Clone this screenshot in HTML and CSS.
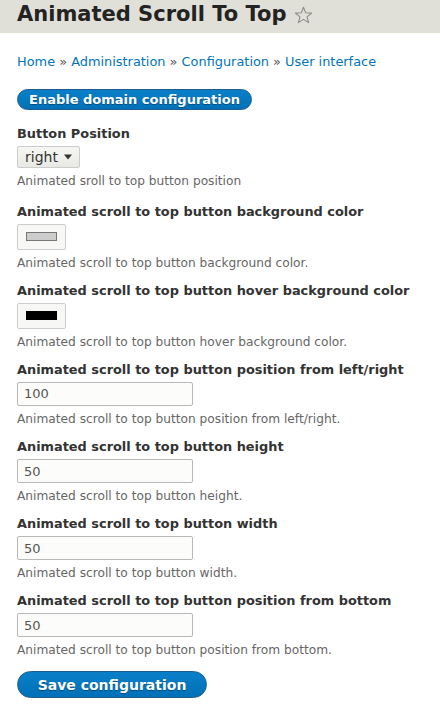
FILE: index.html
```html
<!DOCTYPE html>
<html lang="en">
<head>
<meta charset="utf-8">
<title>Animated Scroll To Top</title>
<link rel="stylesheet" href="styles.css">
</head>
<body>
<header class="page-header">
  <h1 class="page-title">Animated Scroll To Top
    <svg class="star" width="19" height="18" viewBox="0 0 20 19" aria-hidden="true"><path d="M10 1.3 L12.3 7.2 L18.6 7.5 L13.7 11.5 L15.4 17.6 L10 14.1 L4.6 17.6 L6.3 11.5 L1.4 7.5 L7.7 7.2 Z" fill="none" stroke="#8b8b86" stroke-width="1.1" stroke-linejoin="round"/></svg>
  </h1>
</header>
<main class="content">
  <nav class="breadcrumb">
    <a href="#">Home</a> » <a href="#">Administration</a> » <a href="#">Configuration</a> » <a href="#">User interface</a>
  </nav>
  <div class="actions-top"><a class="button button-small" href="#">Enable domain configuration</a></div>
  <form class="config-form">
    <div class="form-item form-item-select">
      <label class="label">Button Position</label>
      <div class="select"><span>right</span><svg width="8" height="6" viewBox="0 0 8 6" aria-hidden="true"><path d="M0 0.5 H8 L4 5.5 Z" fill="#333"/></svg></div>
      <div class="desc">Animated sroll to top button position</div>
    </div>
    <div class="form-item">
      <label class="label">Animated scroll to top button background color</label>
      <div class="color-input"><span class="swatch swatch-gray"></span></div>
      <div class="desc">Animated scroll to top button background color.</div>
    </div>
    <div class="form-item">
      <label class="label">Animated scroll to top button hover background color</label>
      <div class="color-input"><span class="swatch swatch-black"></span></div>
      <div class="desc">Animated scroll to top button hover background color.</div>
    </div>
    <div class="form-item">
      <label class="label">Animated scroll to top button position from left/right</label>
      <input class="text-input" type="text" value="100">
      <div class="desc">Animated scroll to top button position from left/right.</div>
    </div>
    <div class="form-item">
      <label class="label">Animated scroll to top button height</label>
      <input class="text-input" type="text" value="50">
      <div class="desc">Animated scroll to top button height.</div>
    </div>
    <div class="form-item">
      <label class="label">Animated scroll to top button width</label>
      <input class="text-input" type="text" value="50">
      <div class="desc">Animated scroll to top button width.</div>
    </div>
    <div class="form-item">
      <label class="label">Animated scroll to top button position from bottom</label>
      <input class="text-input" type="text" value="50">
      <div class="desc">Animated scroll to top button position from bottom.</div>
    </div>
    <div class="form-actions"><button class="button button-primary" type="button">Save configuration</button></div>
  </form>
</main>
</body>
</html>
```
FILE: styles.css
```css
html, body {
  margin: 0;
  padding: 0;
  background: #fff;
}
body {
  font-family: "DejaVu Sans", Verdana, sans-serif;
  font-size: 13px;
  color: #333;
}
.page-header {
  background: #e0e0d8;
  height: 33px;
  padding: 0 17px;
  box-sizing: border-box;
  overflow: hidden;
}
.page-title {
  margin: 0;
  font-size: 21px;
  line-height: 29px;
  font-weight: bold;
  color: #232323;
  display: flex;
  align-items: center;
  gap: 8px;
}
.star {
  display: block;
  margin-top: 1px;
}
.content {
  padding: 0 17px;
}
.breadcrumb {
  margin-top: 19px;
  line-height: 20px;
  font-size: 12.9px;
  color: #555;
}
.breadcrumb a {
  color: #0074bd;
  text-decoration: none;
}
.actions-top {
  margin-top: 17px;
  display: flex;
}
.button {
  display: inline-flex;
  align-items: center;
  justify-content: center;
  box-sizing: border-box;
  border: 1px solid #1e5c90;
  border-radius: 20em;
  color: #fff;
  font-family: "DejaVu Sans", Verdana, sans-serif;
  font-weight: bold;
  text-decoration: none;
  background: linear-gradient(to bottom, #0a7fc8 0%, #0071b8 100%);
  text-shadow: 0 1px 1px rgba(0,0,0,0.35);
}
.button-small {
  height: 21px;
  width: 235px;
  font-size: 13px;
  padding: 0;
}
.config-form {
  margin-top: 15px;
}
.form-item {
  margin-bottom: 11.2px;
}
.form-item-select {
  margin-bottom: 13.5px;
}
.label {
  display: block;
  font-weight: bold;
  line-height: 18px;
  font-size: 12.9px;
  color: #333;
  margin-bottom: 3px;
}
.select {
  box-sizing: border-box;
  width: 63px;
  height: 22px;
  border: 1px solid #ccc;
  border-radius: 2px;
  background: linear-gradient(to bottom, #f6f6f3, #e8e8e4);
  display: flex;
  align-items: center;
  padding: 0 7px;
  justify-content: space-between;
  font-size: 14px;
  color: #333;
}
.color-input {
  box-sizing: border-box;
  width: 49px;
  height: 26px;
  border: 1px solid #ccc;
  border-radius: 2px;
  background: #f7f7f5;
  display: flex;
  align-items: center;
  justify-content: center;
}
.swatch {
  display: block;
  width: 31px;
  height: 9px;
  box-sizing: border-box;
  border: 1px solid #777;
}
.swatch-gray { background: #cccccc; }
.swatch-black { background: #000; border-color: #000; }
.text-input {
  display: block;
  box-sizing: border-box;
  width: 176px;
  height: 24px;
  margin: 0;
  border: 1px solid #b8b8b8;
  border-radius: 2px;
  background: #fcfcfa;
  padding: 0 6px;
  font-family: "DejaVu Sans", Verdana, sans-serif;
  font-size: 13px;
  color: #555;
  outline: none;
}
.desc {
  margin-top: 5px;
  font-size: 12.2px;
  line-height: 16px;
  color: #666;
}
.form-actions {
  margin-top: 13px;
  display: flex;
}
.button-primary {
  height: 27px;
  width: 190px;
  font-size: 14px;
  padding: 0;
  cursor: pointer;
}
```
